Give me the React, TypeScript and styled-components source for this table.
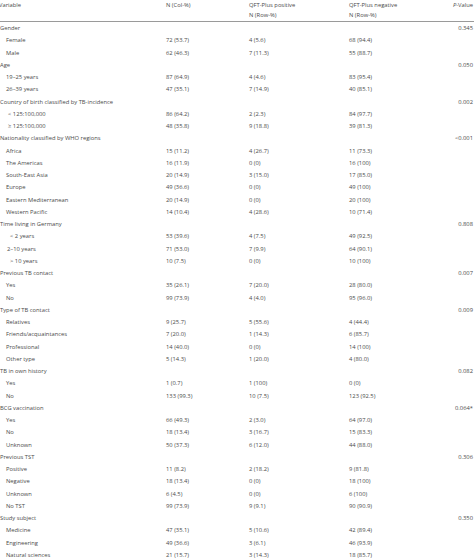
import React from 'react';
import styled, { createGlobalStyle } from 'styled-components';

type Row = {
    label: string;
    n?: string;
    pos?: string;
    neg?: string;
    p?: string;
    indent?: number;
};

const rows: Row[] = [
    { label: 'Gender', p: '0.345' },
    { label: 'Female', n: '72 (53.7)', pos: '4 (5.6)', neg: '68 (94.4)', indent: 6 },
    { label: 'Male', n: '62 (46.3)', pos: '7 (11.3)', neg: '55 (88.7)', indent: 6 },
    { label: 'Age', p: '0.050' },
    { label: '19–25 years', n: '87 (64.9)', pos: '4 (4.6)', neg: '83 (95.4)', indent: 6 },
    { label: '26–39 years', n: '47 (35.1)', pos: '7 (14.9)', neg: '40 (85.1)', indent: 6 },
    { label: 'Country of birth classified by TB-incidence', p: '0.002' },
    { label: '< 125:100,000', n: '86 (64.2)', pos: '2 (2.3)', neg: '84 (97.7)', indent: 8 },
    { label: '≥ 125:100,000', n: '48 (35.8)', pos: '9 (18.8)', neg: '39 (81.3)', indent: 8 },
    { label: 'Nationality classified by WHO regions', p: '<0.001' },
    { label: 'Africa', n: '15 (11.2)', pos: '4 (26.7)', neg: '11 (73.3)', indent: 6 },
    { label: 'The Americas', n: '16 (11.9)', pos: '0 (0)', neg: '16 (100)', indent: 6 },
    { label: 'South-East Asia', n: '20 (14.9)', pos: '3 (15.0)', neg: '17 (85.0)', indent: 6 },
    { label: 'Europe', n: '49 (36.6)', pos: '0 (0)', neg: '49 (100)', indent: 6 },
    { label: 'Eastern Mediterranean', n: '20 (14.9)', pos: '0 (0)', neg: '20 (100)', indent: 6 },
    { label: 'Western Pacific', n: '14 (10.4)', pos: '4 (28.6)', neg: '10 (71.4)', indent: 6 },
    { label: 'Time living in Germany', p: '0.808' },
    { label: '< 2 years', n: '53 (39.6)', pos: '4 (7.5)', neg: '49 (92.5)', indent: 10 },
    { label: '2–10 years', n: '71 (53.0)', pos: '7 (9.9)', neg: '64 (90.1)', indent: 7 },
    { label: '> 10 years', n: '10 (7.5)', pos: '0 (0)', neg: '10 (100)', indent: 10 },
    { label: 'Previous TB contact', p: '0.007' },
    { label: 'Yes', n: '35 (26.1)', pos: '7 (20.0)', neg: '28 (80.0)', indent: 6 },
    { label: 'No', n: '99 (73.9)', pos: '4 (4.0)', neg: '95 (96.0)', indent: 6 },
    { label: 'Type of TB contact', p: '0.009' },
    { label: 'Relatives', n: '9 (25.7)', pos: '5 (55.6)', neg: '4 (44.4)', indent: 6 },
    { label: 'Friends/acquaintances', n: '7 (20.0)', pos: '1 (14.3)', neg: '6 (85.7)', indent: 6 },
    { label: 'Professional', n: '14 (40.0)', pos: '0 (0)', neg: '14 (100)', indent: 6 },
    { label: 'Other type', n: '5 (14.3)', pos: '1 (20.0)', neg: '4 (80.0)', indent: 6 },
    { label: 'TB in own history', p: '0.082' },
    { label: 'Yes', n: '1 (0.7)', pos: '1 (100)', neg: '0 (0)', indent: 6 },
    { label: 'No', n: '133 (99.3)', pos: '10 (7.5)', neg: '123 (92.5)', indent: 6 },
    { label: 'BCG vaccination', p: '0.064*' },
    { label: 'Yes', n: '66 (49.3)', pos: '2 (3.0)', neg: '64 (97.0)', indent: 6 },
    { label: 'No', n: '18 (13.4)', pos: '3 (16.7)', neg: '15 (83.3)', indent: 6 },
    { label: 'Unknown', n: '50 (37.3)', pos: '6 (12.0)', neg: '44 (88.0)', indent: 6 },
    { label: 'Previous TST', p: '0.306' },
    { label: 'Positive', n: '11 (8.2)', pos: '2 (18.2)', neg: '9 (81.8)', indent: 6 },
    { label: 'Negative', n: '18 (13.4)', pos: '0 (0)', neg: '18 (100)', indent: 6 },
    { label: 'Unknown', n: '6 (4.5)', pos: '0 (0)', neg: '6 (100)', indent: 6 },
    { label: 'No TST', n: '99 (73.9)', pos: '9 (9.1)', neg: '90 (90.9)', indent: 6 },
    { label: 'Study subject', p: '0.350' },
    { label: 'Medicine', n: '47 (35.1)', pos: '5 (10.6)', neg: '42 (89.4)', indent: 6 },
    { label: 'Engineering', n: '49 (36.6)', pos: '3 (6.1)', neg: '46 (93.9)', indent: 6 },
    { label: 'Natural sciences', n: '21 (15.7)', pos: '3 (14.3)', neg: '18 (85.7)', indent: 6 },
];

const App: React.FC = () => {
    return (
        <Table>
            <GlobalStyle />
            <Header>
                <HeadCell>Variable</HeadCell>
                <HeadCell>N (Col-%)</HeadCell>
                <HeadCell>
                    <div>QFT-Plus positive</div>
                    <SubHead>N (Row-%)</SubHead>
                </HeadCell>
                <HeadCell>
                    <div>QFT-Plus negative</div>
                    <SubHead>N (Row-%)</SubHead>
                </HeadCell>
                <PHead><i>P</i>-Value</PHead>
            </Header>
            {rows.map((r, i) => (
                <BodyRow key={i}>
                    <Label indent={r.indent ?? -1}>{r.label}</Label>
                    <Cell>{r.n}</Cell>
                    <Cell>{r.pos}</Cell>
                    <Cell>{r.neg}</Cell>
                    <PCell>{r.p}</PCell>
                </BodyRow>
            ))}
        </Table>
    );
};

export default App;

const GlobalStyle = createGlobalStyle`
    body {
        margin : 0;
        background : #ffffff;
    }
`

const Table = styled.div`
    width : 474px;
    font-family : "Open Sans", "Noto Sans", sans-serif;
    font-size : 5.8px;
    color : #4a4a4a;
    overflow : hidden;
`

const Header = styled.div`
    display : grid;
    grid-template-columns : 166px 83px 100px 1fr auto;
    height : 21px;
    border-bottom : 1px solid #9a9a9a;
`

const HeadCell = styled.div`
    line-height : 10px;
    &:first-child {
        margin-left : -1px;
    }
`

const SubHead = styled.div`
    line-height : 10px;
`

const PHead = styled.div`
    line-height : 10px;
    text-align : right;
    padding-right : 1px;
    white-space : nowrap;
`

const BodyRow = styled.div`
    display : grid;
    grid-template-columns : 166px 83px 100px 1fr auto;
    height : 12.25px;
    line-height : 12.25px;
    white-space : nowrap;
`

const Label = styled.div<{ indent: number }>`
    padding-left : ${(p) => p.indent}px;
`

const Cell = styled.div``

const PCell = styled.div`
    text-align : right;
    padding-right : 1px;
`
